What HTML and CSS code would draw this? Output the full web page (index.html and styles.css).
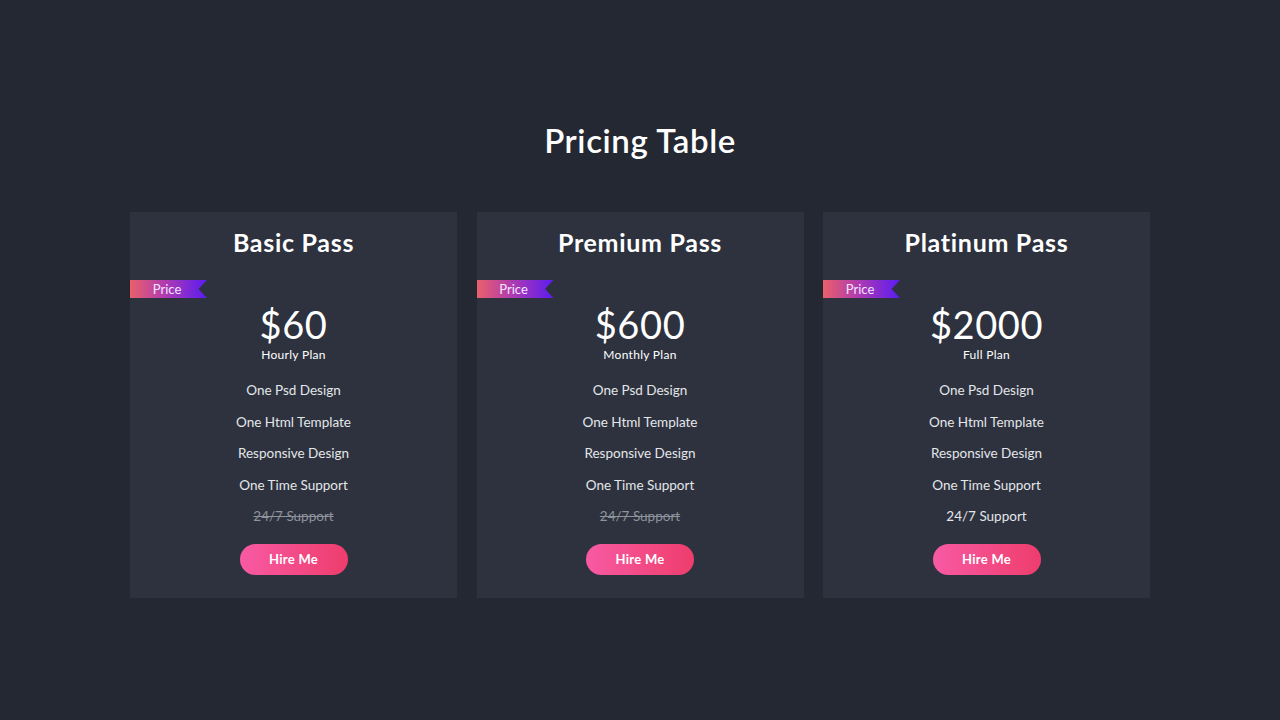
FILE: index.html
```html
<!DOCTYPE html>
<html lang="en">
<head>
<meta charset="utf-8">
<title>Pricing Table</title>
<link rel="stylesheet" href="styles.css">
</head>
<body>
<main class="page">
  <h1 class="page-title">Pricing Table</h1>
  <div class="cards">
    <section class="card">
      <h2 class="card-title">Basic Pass</h2>
      <div class="ribbon">Price</div>
      <div class="price">$60</div>
      <div class="plan">Hourly Plan</div>
      <ul class="features">
        <li>One Psd Design</li>
        <li>One Html Template</li>
        <li>Responsive Design</li>
        <li>One Time Support</li>
        <li class="off">24/7 Support</li>
      </ul>
      <button class="btn">Hire Me</button>
    </section>
    <section class="card">
      <h2 class="card-title">Premium Pass</h2>
      <div class="ribbon">Price</div>
      <div class="price">$600</div>
      <div class="plan">Monthly Plan</div>
      <ul class="features">
        <li>One Psd Design</li>
        <li>One Html Template</li>
        <li>Responsive Design</li>
        <li>One Time Support</li>
        <li class="off">24/7 Support</li>
      </ul>
      <button class="btn">Hire Me</button>
    </section>
    <section class="card">
      <h2 class="card-title">Platinum Pass</h2>
      <div class="ribbon">Price</div>
      <div class="price">$2000</div>
      <div class="plan">Full Plan</div>
      <ul class="features">
        <li>One Psd Design</li>
        <li>One Html Template</li>
        <li>Responsive Design</li>
        <li>One Time Support</li>
        <li>24/7 Support</li>
      </ul>
      <button class="btn">Hire Me</button>
    </section>
  </div>
</main>
</body>
</html>
```
FILE: styles.css
```css
* { box-sizing: border-box; }
html, body { margin: 0; padding: 0; }
body {
  background: #232833;
  color: #ffffff;
  font-family: "Lato", "Open Sans", sans-serif;
  width: 1280px;
  height: 720px;
  overflow: hidden;
}
.page {
  display: flex;
  flex-direction: column;
  align-items: center;
  padding-top: 120px;
}
.page-title {
  margin: 0;
  font-size: 33px;
  line-height: 40px;
  font-weight: 600;
  letter-spacing: 0.6px;
  color: #ffffff;
}
.cards {
  display: flex;
  gap: 19.5px;
  margin-top: 52px;
}
.card {
  width: 327px;
  background: #2d323e;
  display: flex;
  flex-direction: column;
  align-items: center;
  padding: 15px 0 23px;
}
.card-title {
  margin: 0;
  font-size: 25px;
  line-height: 30px;
  font-weight: 700;
  letter-spacing: 0.7px;
  color: #ffffff;
}
.ribbon {
  align-self: flex-start;
  margin-top: 23px;
  width: 77px;
  height: 18px;
  line-height: 18px;
  font-size: 13px;
  padding-right: 3px;
  text-align: center;
  color: #f2e6ff;
  background: linear-gradient(90deg, #ea606a 0%, #b03bb0 45%, #5a1cf2 100%);
  clip-path: polygon(0 0, 100% 0, 89% 50%, 100% 100%, 0 100%);
}
.price {
  margin-top: 3px;
  font-size: 38px;
  line-height: normal;
  font-weight: 400;
  letter-spacing: 0.6px;
  color: #ffffff;
}
.plan {
  margin-top: 0;
  font-size: 12px;
  line-height: normal;
  font-weight: 400;
  letter-spacing: 0.3px;
  color: #ffffff;
}
.features {
  list-style: none;
  margin: 13px 0 0;
  padding: 0;
  text-align: center;
}
.features li {
  font-size: 13.5px;
  line-height: 31.5px;
  letter-spacing: 0;
  color: #e4e6ea;
}
.features li.off {
  text-decoration: line-through;
  color: #8e939c;
}
.btn {
  margin-top: 11px;
  width: 108px;
  height: 31px;
  border: none;
  border-radius: 16px;
  background: linear-gradient(90deg, #f85aa3 0%, #ee3d6d 100%);
  color: #ffffff;
  font-family: inherit;
  font-size: 13px;
  font-weight: 700;
  letter-spacing: 0.3px;
  cursor: pointer;
}
```
